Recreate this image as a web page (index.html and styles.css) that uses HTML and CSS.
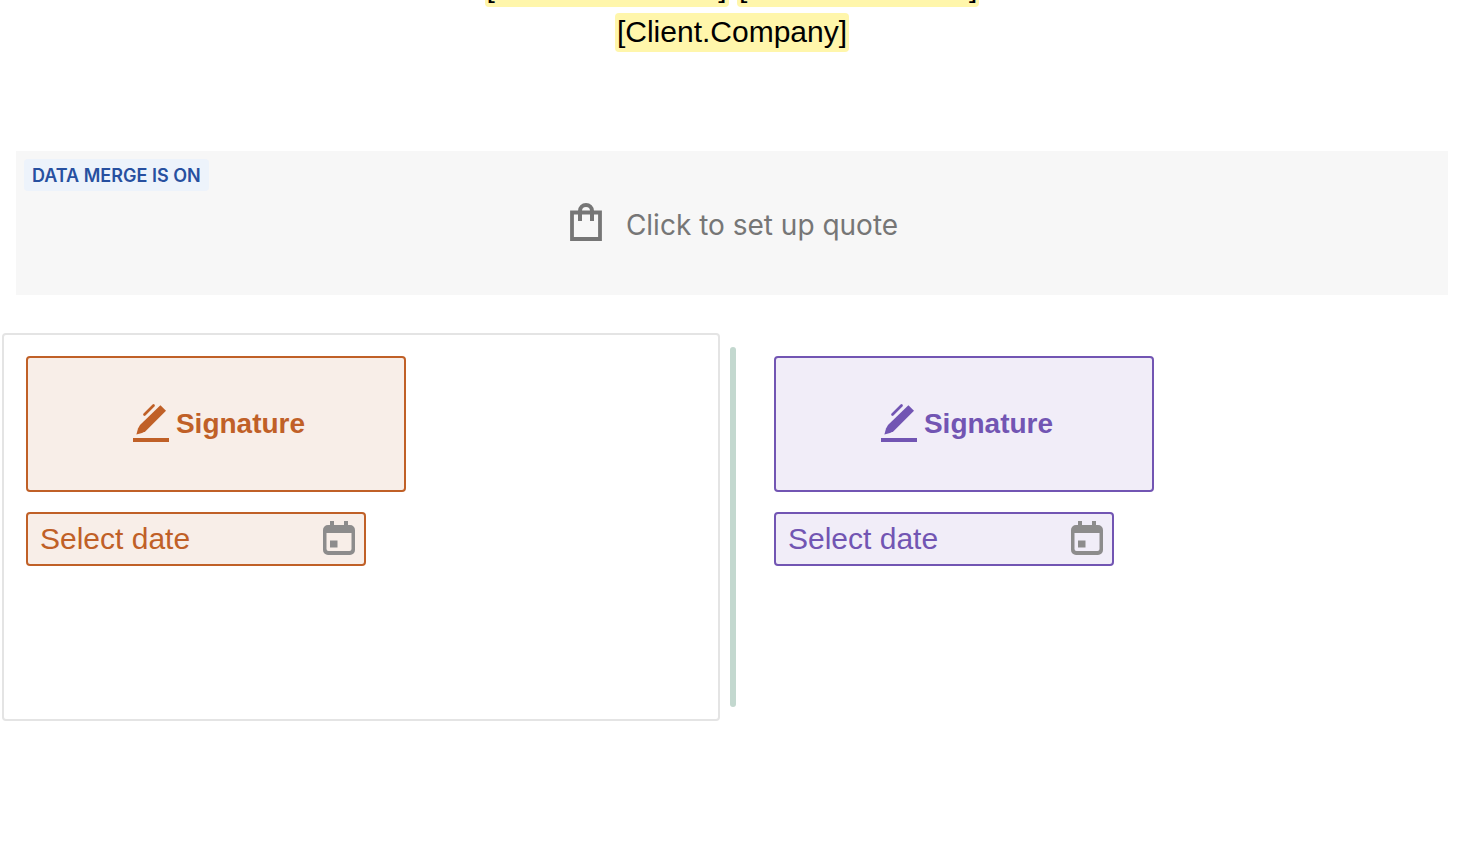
FILE: index.html
```html
<!DOCTYPE html>
<html lang="en">
<head>
<meta charset="utf-8">
<title>Document editor</title>
<link rel="stylesheet" href="styles.css">
</head>
<body>
<svg class="symbols" aria-hidden="true">
  <symbol id="pen" viewBox="0 0 36 40">
    <path d="M0 34h36v4H0z"/>
    <path d="M27.400 1.200 33 6.800 12.500 27.300 9 29 3.400 30.600 5 24.500 7 21z"/>
    <path d="M11.500 10.500 20.500 1.500" fill="none" stroke="currentColor" stroke-width="2.600" stroke-linecap="round"/>
  </symbol>
  <symbol id="calendar" viewBox="0 0 32 34">
    <path fill-rule="evenodd" d="M7 0h4v4h10V0h4v4h2a5 5 0 0 1 5 5v20a5 5 0 0 1-5 5H5a5 5 0 0 1-5-5V9a5 5 0 0 1 5-5h2zM3.500 12v16a2 2 0 0 0 2 2h21a2 2 0 0 0 2-2V12z"/>
    <path d="M7 19.500h7.500v7H7z"/>
  </symbol>
</svg>
<main class="document">
  <p class="client">
    <span class="token">[Client.FirstName]</span> <span class="token">[Client.LastName]</span><br>
    <span class="token">[Client.Company]</span>
  </p>
  <section class="quote">
    <span class="merge-badge">DATA MERGE IS ON</span>
    <button class="quote-setup" type="button">
      <svg class="bag" viewBox="0 0 32 40" fill="none" stroke="currentColor" aria-hidden="true">
        <path d="M2 9.500h28V36H2z" stroke-width="3.800"/>
        <path d="M10 18V8a6 6 0 0 1 12 0V18" stroke-width="4"/>
      </svg>
      Click to set up quote
    </button>
  </section>
  <section class="signers">
    <div class="signer signer-selected orange">
      <button class="signature" type="button"><svg class="pen" aria-hidden="true"><use href="#pen"/></svg>Signature</button>
      <div class="date">
        <input class="date-input" type="text" placeholder="Select date" aria-label="Client date">
        <button class="date-button" type="button" aria-label="Open client calendar"><svg class="calendar" aria-hidden="true"><use href="#calendar"/></svg></button>
      </div>
    </div>
    <div class="divider"></div>
    <div class="signer purple">
      <button class="signature" type="button"><svg class="pen" aria-hidden="true"><use href="#pen"/></svg>Signature</button>
      <div class="date">
        <input class="date-input" type="text" placeholder="Select date" aria-label="Sender date">
        <button class="date-button" type="button" aria-label="Open sender calendar"><svg class="calendar" aria-hidden="true"><use href="#calendar"/></svg></button>
      </div>
    </div>
  </section>
</main>
</body>
</html>
```
FILE: styles.css
```css
* {
  box-sizing: border-box;
}

body {
  margin: 0;
  background: #fff;
  color: #000;
  font-family: "Liberation Sans", Arial, sans-serif;
}

button {
  margin: 0;
  padding: 0;
  border: 0;
  background: none;
  color: inherit;
  font: inherit;
  cursor: pointer;
}

svg {
  flex: none;
  fill: currentColor;
}

.symbols {
  display: none;
}

.document {
  padding-right: 20px;
}

/* The first line is scrolled partly above the window. */
.client {
  margin: -36px 0 97px;
  font-size: 30px;
  line-height: 45px;
  text-align: center;
}

.token {
  padding: 2px 2px 4px;
  border-radius: 4px;
  background: #fff6ab;
}

.quote {
  display: flex;
  flex-direction: column;
  align-items: flex-start;
  margin: 0 16px 38px;
  padding: 8px 8px 46px;
  background: #f7f7f7;
  font-family: Inter, sans-serif;
}

.merge-badge {
  padding: 1px 8px 0;
  border-radius: 4px;
  background: #edf3fb;
  color: #2750a0;
  font-size: 18px;
  font-weight: 600;
  line-height: 31px;
}

.quote-setup {
  display: flex;
  align-items: center;
  align-self: center;
  gap: 24px;
  margin-top: 10px;
  padding-left: 4px;
  color: #767676;
  font-size: 28px;
  line-height: 48px;
}

.bag {
  width: 32px;
  height: 40px;
  margin-bottom: 4px;
  fill: none;
}

.signers {
  display: grid;
  grid-template-columns: 1fr 6px 1fr;
  padding-left: 2px;
}

.signer {
  display: flex;
  flex-direction: column;
  align-items: flex-start;
  gap: 20px;
  min-height: 388px;
  padding: 21px 22px;
  border: 2px solid transparent;
  border-radius: 4px;
}

.signer-selected {
  margin-right: 10px;
  border-color: #e4e4e4;
}

.purple {
  margin-left: 14px;
}

.divider {
  margin: 14px 0;
  border-radius: 3px;
  background: #c3d8cf;
}

.orange {
  --ink: #c06027;
  --tint: #f8eee8;
}

.purple {
  --ink: #7255b3;
  --tint: #f1edf8;
}

.signature {
  display: flex;
  align-items: center;
  justify-content: center;
  gap: 7px;
  width: 380px;
  height: 136px;
  padding-left: 6px;
  border: 2px solid var(--ink);
  border-radius: 4px;
  background: var(--tint);
  color: var(--ink);
  font-size: 28px;
  font-weight: bold;
}

.pen {
  width: 36px;
  height: 40px;
}

.date {
  display: flex;
  align-items: center;
  width: 340px;
  height: 54px;
  padding: 0 9px 0 12px;
  border: 2px solid var(--ink);
  border-radius: 4px;
  background: var(--tint);
}

.date-input {
  flex: 1;
  min-width: 0;
  padding: 0;
  border: 0;
  background: none;
  color: var(--ink);
  font: 30px "Liberation Sans", Arial, sans-serif;
}

.date-input::placeholder {
  color: var(--ink);
  opacity: 1;
}

.date-button {
  display: flex;
  padding-bottom: 2px;
  color: #8d8c8c;
}

.calendar {
  width: 32px;
  height: 34px;
}
```
